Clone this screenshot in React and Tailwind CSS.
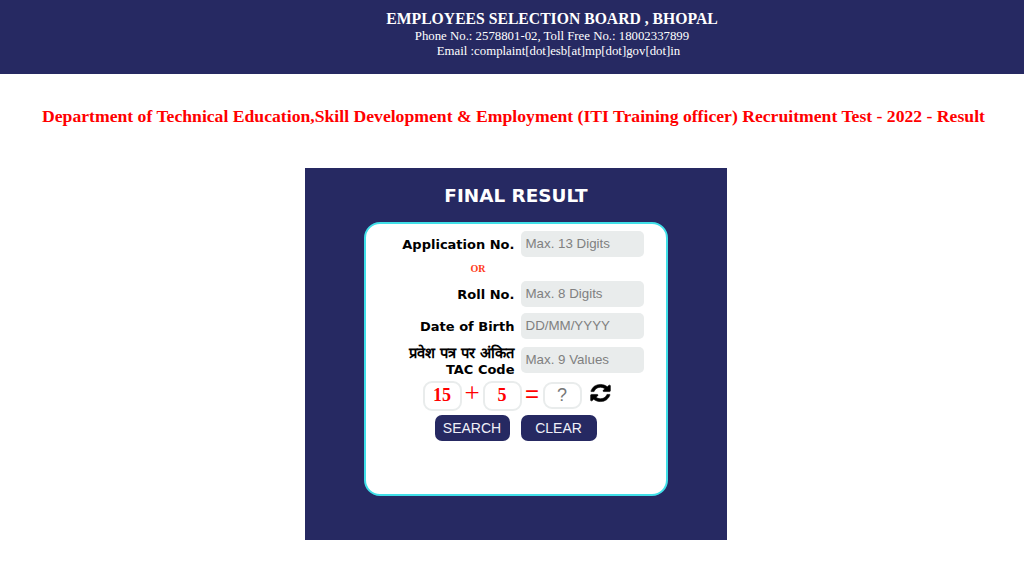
import React from "react";

const labelCls = "w-[149px] text-right font-['Verdana','DejaVu_Sans',sans-serif] text-[13px] font-bold text-black leading-[17px]";
const inputCls = "w-[123px] rounded-[5px] bg-[#e9ecec] px-[5px] pb-[2px] font-['Liberation_Sans',sans-serif] text-[13.33px] text-[#333] placeholder:text-[#808080] outline-none";

function Row({ label, placeholder, className }) {
  return (
    <div className={"flex items-center gap-[6px] " + className}>
      <div className={labelCls}>{label}</div>
      <input className={inputCls + " h-[26px]"} placeholder={placeholder} />
    </div>
  );
}

function Cap({ children, w, h, cls }) {
  return (
    <div className={"flex items-center justify-center rounded-[9px] border-2 border-[#e9ecec] bg-white " + w + " " + h + " " + cls}>
      {children}
    </div>
  );
}

export default function App() {
  return (
    <div className="h-[565px] w-[1024px] overflow-hidden bg-white font-['Liberation_Serif',serif]">
      <header className="flex h-[74px] flex-col items-center bg-[#262962] pl-[80px] pt-[10px] text-white">
        <div className="text-[15.7px] font-bold leading-[18px]">EMPLOYEES SELECTION BOARD , BHOPAL</div>
        <div className="pt-[1px] text-[12.8px] leading-[15px]">Phone No.: 2578801-02, Toll Free No.: 18002337899</div>
        <div className="pl-[13px] text-[12.8px] leading-[15px]">Email :complaint[dot]esb[at]mp[dot]gov[dot]in</div>
      </header>

      <h2 className="mt-[30px] h-[64px] whitespace-nowrap pl-[42px] text-[17.66px] font-bold leading-[24px] text-[#ff0000]">
        Department of Technical Education,Skill Development &amp; Employment (ITI Training officer) Recruitment Test - 2022 - Result
      </h2>

      <main className="ml-[305px] flex h-[372px] w-[422px] flex-col items-center bg-[#262962] pt-[17px]">
        <div className="font-['Verdana','DejaVu_Sans',sans-serif] text-[18.4px] font-bold leading-[22px] text-white">FINAL RESULT</div>

        <section className="mt-[15px] ml-[-1px] h-[274px] w-[304px] rounded-[16px] border-2 border-[#40dfe8] bg-white pt-[7px]">
          <Row label="Application No." placeholder="Max. 13 Digits" className="" />
          <div className="h-[24px] w-[226px] pl-[105px] pt-[4px] font-['Liberation_Serif',serif] text-[10px] font-bold leading-[16px] text-[#ff3a1a]">OR</div>
          <Row label="Roll No." placeholder="Max. 8 Digits" className="" />
          <Row label="Date of Birth" placeholder="DD/MM/YYYY" className="mt-[6px]" />
          <div className="mt-[5px] flex items-center gap-[6px]">
            <div className={labelCls}>
              <div className="text-[14.7px] leading-[17px]">प्रवेश पत्र पर अंकित</div>
              <div>TAC Code</div>
            </div>
            <input className={inputCls + " mb-[2px] h-[26px]"} placeholder="Max. 9 Values" />
          </div>

          <div className="mt-[2px] flex h-[31px] items-center pl-[57px]">
            <Cap w="w-[39px]" h="h-[30px]" cls="font-['Liberation_Serif',serif] text-[18px] font-bold text-[#ff0000]">15</Cap>
            <span className="w-[21px] -translate-y-[3px] text-center font-['Liberation_Serif',serif] text-[27px] leading-[24px] text-[#ff0000]">+</span>
            <Cap w="w-[39px]" h="h-[30px]" cls="font-['Liberation_Serif',serif] text-[18px] font-bold text-[#ff0000]">5</Cap>
            <span className="w-[21px] -translate-y-[2px] text-center font-['Liberation_Sans',sans-serif] text-[24px] leading-[24px] text-[#ff0000]">=</span>
            <Cap w="w-[39px]" h="h-[27px]" cls="font-['Liberation_Sans',sans-serif] text-[18px] text-[#777]">?</Cap>
            <svg viewBox="0 0 1792 1792" preserveAspectRatio="none" className="ml-[7px] h-[20px] w-[23px] -translate-y-[3px]" fill="#000" stroke="#000" strokeWidth="50">
              <path d="M1639 1056q0 5-1 7-64 268-268 434.5t-478 166.5q-146 0-282.5-55t-243.5-157l-129 129q-19 19-45 19t-45-19-19-45v-448q0-26 19-45t45-19h448q26 0 45 19t19 45-19 45l-137 137q71 66 161 102t187 36q134 0 250-65t186-179q11-17 53-117 8-23 30-23h192q13 0 22.5 9.5t9.5 22.5zm25-800v448q0 26-19 45t-45 19h-448q-26 0-45-19t-19-45 19-45l138-138q-148-137-349-137-134 0-250 65t-186 179q-11 17-53 117-8 23-30 23h-199q-13 0-22.5-9.5t-9.5-22.5v-7q65-268 270-434.5t480-166.5q146 0 284 55.5t245 156.5l130-129q19-19 45-19t45 19 19 45z" />
            </svg>
          </div>

          <div className="mt-[4px] flex gap-[11px] pl-[69px]">
            <button className="h-[26px] w-[75px] rounded-[7px] bg-[#262962] font-['Liberation_Sans',sans-serif] text-[14px] text-[#f0f0f8]">SEARCH</button>
            <button className="h-[26px] w-[76px] rounded-[7px] bg-[#262962] font-['Liberation_Sans',sans-serif] text-[14px] text-[#f0f0f8]">CLEAR</button>
          </div>
        </section>
      </main>
    </div>
  );
}
